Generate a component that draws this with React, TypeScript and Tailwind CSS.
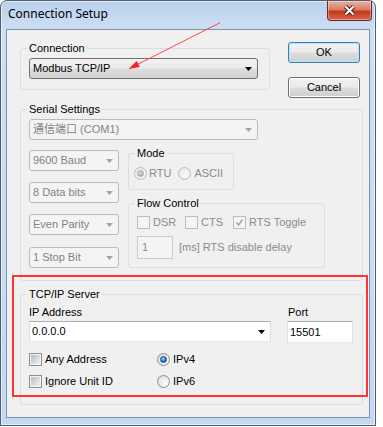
import React from "react";

type Kind = "list" | "disabled" | "edit";

function Arrow({ color }: { color: string }) {
  return (
    <svg width="7" height="4" viewBox="0 0 7 4" className="shrink-0">
      <path d="M0 0h7L3.5 4z" fill={color} />
    </svg>
  );
}

function Combo({ text, width, kind }: { text: string; width: string; kind: Kind }) {
  const box =
    kind === "list"
      ? "rounded-[3px] border-[#707070] bg-[linear-gradient(to_bottom,#f2f2f2_0%,#ebebeb_48%,#dddddd_52%,#d2d2d2_100%)] text-black pl-[3px]"
      : kind === "disabled"
        ? "rounded-[3px] border-[#b8bcbf] bg-[#f4f4f4] text-[#838383] pl-[3px]"
        : "border-[#abadb3] border-x-[#dbdfe6] border-b-[#e3e9ef] bg-white text-black pl-[2px]";
  return (
    <div className={`${width} h-[21px] border flex items-center pr-[5px] ${box}`}>
      <span className="flex-1 whitespace-nowrap overflow-hidden">{text}</span>
      <Arrow color={kind === "disabled" ? "#a4a4a4" : "#000000"} />
    </div>
  );
}

function Button({ label, focused }: { label: string; focused?: boolean }) {
  return (
    <div
      className={`w-[72px] h-[21px] rounded-[3px] border flex items-center justify-center bg-[linear-gradient(to_bottom,#f2f2f2_0%,#ebebeb_48%,#dddddd_52%,#cfcfcf_100%)] ${
        focused ? "border-[#3c7fb1] shadow-[inset_0_0_0_1px_#b6e3f7]" : "border-[#707070] shadow-[inset_0_0_0_1px_#fcfcfc]"
      }`}
    >
      {label}
    </div>
  );
}

function Check({ disabled, checked }: { disabled?: boolean; checked?: boolean }) {
  return (
    <div
      className={`w-[13px] h-[13px] border p-[1px] shrink-0 ${
        disabled ? "border-[#bcbcbc] bg-[#f4f4f4]" : "border-[#8e8f8f] bg-[#f4f4f4]"
      }`}
    >
      <div
        className={`w-full h-full ${
          disabled ? "bg-[#f4f4f4]" : "bg-[linear-gradient(135deg,#b3b8bd,#e4e4e4_70%,#f0f0f0)]"
        }`}
      >
        {checked && (
          <svg width="9" height="9" viewBox="0 0 9 9">
            <path d="M1.5 4.5L3.5 7L7.5 1.5" stroke="#a6a6a6" strokeWidth="1.5" fill="none" />
          </svg>
        )}
      </div>
    </div>
  );
}

function Radio({ checked, disabled }: { checked?: boolean; disabled?: boolean }) {
  return (
    <div
      className={`w-[13px] h-[13px] rounded-full border shrink-0 flex items-center justify-center ${
        disabled
          ? "border-[#bcbcbc] bg-[radial-gradient(circle_at_60%_60%,#fafafa,#e6e6e6)]"
          : "border-[#8e8f8f] bg-[radial-gradient(circle_at_65%_65%,#ffffff,#cfd2d5)]"
      }`}
    >
      {checked && (
        <div
          className={`w-[7px] h-[7px] rounded-full ${
            disabled
              ? "bg-[radial-gradient(circle_at_40%_35%,#e0e0e0,#9c9c9c)] border border-[#a8a8a8]"
              : "bg-[radial-gradient(circle_at_40%_35%,#9be0ff,#1e7fd0_55%,#0c3d70)] border border-[#1a4a7a]"
          }`}
        />
      )}
    </div>
  );
}

function Legend({ children }: { children: React.ReactNode }) {
  return <legend className="ml-[6px] px-[2px] leading-[12px] text-black">{children}</legend>;
}

export default function App() {
  return (
    <div className="relative w-[383px] h-[427px] bg-white text-[11px] leading-[13px] text-black font-['Liberation_Sans','Noto_Sans_CJK_SC',sans-serif]">
      <div className="w-[376px] h-[426px] rounded-t-[7px] border border-[#4f5e70] shadow-[inset_0_0_0_1px_rgba(255,255,255,0.55)] bg-[linear-gradient(to_bottom,#b9d1ec,#cddff3_28px,#c4d9f1)] flex flex-col px-[5px] pb-[7px]">
        <div className="-mx-[5px] h-[28px] flex items-start justify-between pl-[7px] pr-[3px]">
          <span className="pt-[5px] text-[12px] leading-[16px] font-['Noto_Sans',sans-serif] text-black">
            Connection Setup
          </span>
          <div className="w-[45px] h-[20px] rounded-b-[4px] border border-t-0 border-[#6d2b22] bg-[linear-gradient(to_bottom,#e9b2a4,#d97b63_45%,#c2391f_55%,#d8664a)] shadow-[inset_0_0_0_1px_rgba(255,255,255,0.35)] flex items-center justify-center">
            <svg width="13" height="11" viewBox="0 0 13 11">
              <path d="M2.5 1.5L10.5 9.5M10.5 1.5L2.5 9.5" stroke="#4a221b" strokeWidth="4" />
              <path d="M2.5 1.5L10.5 9.5M10.5 1.5L2.5 9.5" stroke="#ffffff" strokeWidth="2" />
            </svg>
          </div>
        </div>

        <div className="flex-1 border border-[#7d92ab] bg-[#f0f0f0] flex flex-col pl-[13px]">
          <div className="flex items-start mt-[12px]">
            <fieldset className="w-[250px] h-[48px] border border-[#d5dfe5] rounded-[3px]">
              <Legend>Connection</Legend>
              <div className="pl-[8px] pt-[4px]">
                <Combo text="Modbus TCP/IP" width="w-[229px]" kind="list" />
              </div>
            </fieldset>
            <div className="ml-[18px] flex flex-col gap-[14px]">
              <Button label="OK" focused />
              <Button label="Cancel" />
            </div>
          </div>

          <fieldset className="mt-[5px] w-[343px] h-[178px] border border-[#d5dfe5] rounded-[3px]">
            <Legend>Serial Settings</Legend>
            <div className="pl-[8px] pt-[4px]">
              <Combo text="通信端口 (COM1)" width="w-[229px]" kind="disabled" />
              <div className="flex items-start mt-[7px]">
                <div className="flex flex-col pt-[3px] w-[90px]">
                  <Combo text="9600 Baud" width="w-[90px]" kind="disabled" />
                  <div className="mt-[11px]">
                    <Combo text="8 Data bits" width="w-[90px]" kind="disabled" />
                  </div>
                  <div className="mt-[11px]">
                    <Combo text="Even Parity" width="w-[90px]" kind="disabled" />
                  </div>
                  <div className="mt-[12px]">
                    <Combo text="1 Stop Bit" width="w-[90px]" kind="disabled" />
                  </div>
                </div>
                <div className="ml-[9px] flex flex-col">
                  <fieldset className="w-[106px] h-[43px] border border-[#d5dfe5] rounded-[3px]">
                    <Legend>Mode</Legend>
                    <div className="flex items-center h-[13px] mt-[8px] ml-[5px] text-[#8b8b8b]">
                      <Radio checked disabled />
                      <span className="ml-[2px]">RTU</span>
                      <div className="ml-[7px]">
                        <Radio disabled />
                      </div>
                      <span className="ml-[3px]">ASCII</span>
                    </div>
                  </fieldset>
                  <fieldset className="mt-[7px] w-[197px] h-[71px] border border-[#d5dfe5] rounded-[3px]">
                    <Legend>Flow Control</Legend>
                    <div className="pl-[8px] pt-[7px] text-[#8b8b8b]">
                      <div className="flex items-center h-[13px]">
                        <div className="w-[48px] flex items-center">
                          <Check disabled />
                          <span className="ml-[3px]">DSR</span>
                        </div>
                        <div className="w-[48px] flex items-center">
                          <Check disabled />
                          <span className="ml-[3px]">CTS</span>
                        </div>
                        <div className="flex items-center">
                          <Check disabled checked />
                          <span className="ml-[3px]">RTS Toggle</span>
                        </div>
                      </div>
                      <div className="flex items-center mt-[7px]">
                        <div className="w-[36px] h-[23px] border border-[#c9ccd1] bg-[#f4f4f4] flex items-center pl-[4px]">
                          1
                        </div>
                        <span className="ml-[6px]">[ms] RTS disable delay</span>
                      </div>
                    </div>
                  </fieldset>
                </div>
              </div>
            </div>
          </fieldset>

          <fieldset className="mt-[7px] w-[343px] h-[117px] border border-[#d5dfe5] rounded-[3px]">
            <Legend>TCP/IP Server</Legend>
            <div className="pl-[8px] pt-[6px]">
              <div className="flex">
                <div className="flex flex-col w-[242px]">
                  <span>IP Address</span>
                  <div className="mt-[2px]">
                    <Combo text="0.0.0.0" width="w-[242px]" kind="edit" />
                  </div>
                </div>
                <div className="ml-[16px] flex flex-col">
                  <span className="pl-[1px]">Port</span>
                  <div className="mt-[2px] w-[66px] h-[22px] border border-[#abadb3] border-x-[#dbdfe6] border-b-[#e3e9ef] bg-white flex items-center pl-[2px]">
                    15501
                  </div>
                </div>
              </div>
              <div className="grid grid-cols-[128px_auto] gap-y-[9px] mt-[10px]">
                <div className="flex items-center h-[13px]">
                  <Check />
                  <span className="ml-[3px]">Any Address</span>
                </div>
                <div className="flex items-center h-[13px]">
                  <Radio checked />
                  <span className="ml-[3px]">IPv4</span>
                </div>
                <div className="flex items-center h-[13px]">
                  <Check />
                  <span className="ml-[3px]">Ignore Unit ID</span>
                </div>
                <div className="flex items-center h-[13px]">
                  <Radio />
                  <span className="ml-[3px]">IPv6</span>
                </div>
              </div>
            </div>
          </fieldset>
        </div>
      </div>

      <div className="absolute left-[12px] top-[275px] w-[356px] h-[122px] border-2 border-[#ff3333] pointer-events-none" />
      <svg className="absolute left-0 top-0 pointer-events-none" width="383" height="427" viewBox="0 0 383 427">
        <path d="M220 22.7L137 64.7" stroke="#ff4a4a" strokeWidth="1" fill="none" />
        <path d="M128.5 69L139.9 67.1L136.7 60.9Z" fill="#ff2020" />
      </svg>
    </div>
  );
}
